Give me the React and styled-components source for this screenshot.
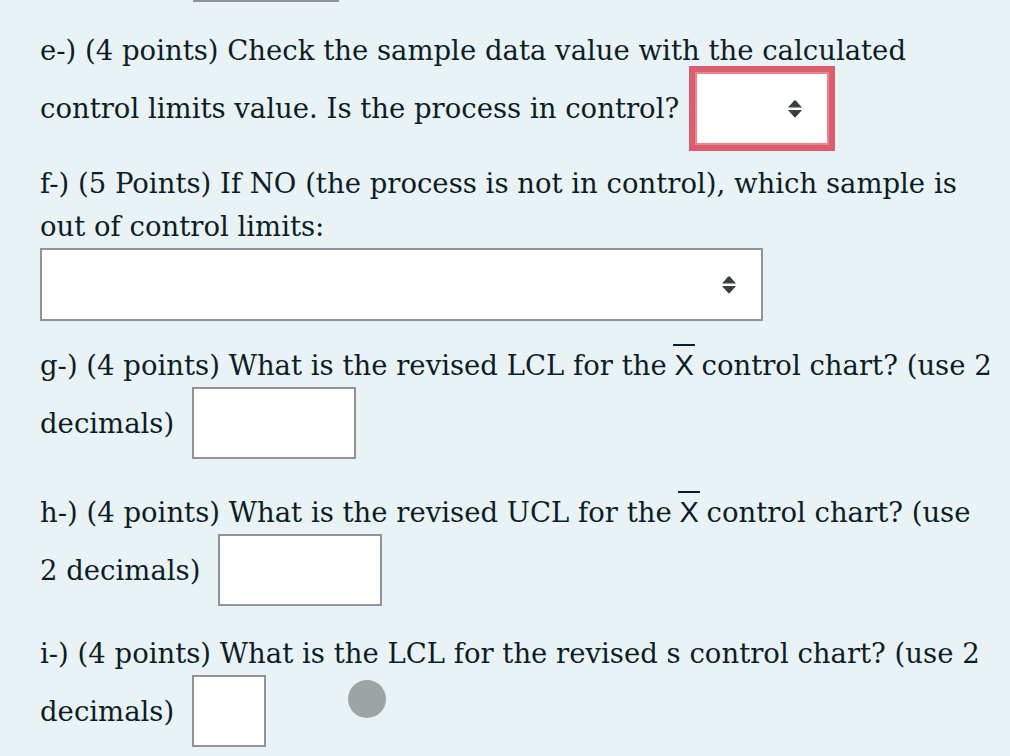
import React from "react";
import styled, { createGlobalStyle } from "styled-components";

const GlobalStyle = createGlobalStyle`
  html, body {
    margin: 0;
    padding: 0;
    background: #e9f2f5;
  }
  body {
    font-family: "DejaVu Serif", serif;
    font-size: 27.5px;
    color: #0c1e25;
  }
  * { box-sizing: border-box; }
`;

const Page = styled.div`
  padding: 0 0 0 40px;
  width: 1010px;
  height: 756px;
  overflow: hidden;
`;

const PrevInputEdge = styled.div`
  margin-left: 153px;
  width: 146px;
  height: 2px;
  background: #8f949a;
`;

const Question = styled.div`
  margin-top: ${(p) => p.$top}px;
`;

const Line = styled.div`
  line-height: 43px;
  white-space: nowrap;
`;

const Row = styled.div`
  display: flex;
  align-items: center;
  gap: ${(p) => p.$gap ?? 18}px;
  line-height: 43px;
  white-space: nowrap;
`;

const XBar = styled.span`
  display: inline-block;
  font-family: "Liberation Sans", Arial, sans-serif;
  font-size: 29px;
  line-height: 24px;
  padding: 7px 1px 0;
  border-top: 2px solid #0c1e25;
  margin: 0 -2px;
`;

const SelectBox = styled.div`
  width: ${(p) => p.$w}px;
  height: 73px;
  background: #ffffff;
  border: 2px solid ${(p) => (p.$focus ? "#ea8491" : "#8f949a")};
  box-shadow: ${(p) => (p.$focus ? "0 0 0 6px #dc5d6d" : "none")};
  display: flex;
  align-items: center;
  justify-content: flex-end;
  padding-right: 24px;
  flex-shrink: 0;
`;

const AnswerInput = styled.input`
  width: ${(p) => p.$w}px;
  height: 72px;
  border: 2px solid #8f949a;
  background: #ffffff;
  border-radius: 0;
  padding: 0 8px;
  font: inherit;
  flex-shrink: 0;
  outline: none;
`;

const Dot = styled.div`
  width: 38px;
  height: 38px;
  border-radius: 50%;
  background: #9ea4a5;
  align-self: flex-start;
  margin-top: 5px;
  margin-left: 64px;
`;

const SortArrows = () => (
  <svg width="16" height="20" viewBox="0 0 16 20" aria-hidden="true">
    <path d="M1 8.5 L7 1.8 Q8 0.8 9 1.8 L15 8.5 Z" fill="#393e43" />
    <path d="M1 11 L15 11 L9 17.7 Q8 18.7 7 17.7 Z" fill="#393e43" />
  </svg>
);

export default function App() {
  return (
    <>
      <GlobalStyle />
      <Page>
        <PrevInputEdge />

        <Question $top={27}>
          <Line>e-) (4 points) Check the sample data value with the calculated</Line>
          <Row $gap={16}>
            <span>control limits value. Is the process in control?</span>
            <SelectBox $w={134} $focus>
              <SortArrows />
            </SelectBox>
          </Row>
        </Question>

        <Question $top={17}>
          <Line>f-) (5 Points) If NO (the process is not in control), which sample is</Line>
          <Line>out of control limits:</Line>
          <SelectBox $w={723}>
            <SortArrows />
          </SelectBox>
        </Question>

        <Question $top={23}>
          <Line>
            g-) (4 points) What is the revised LCL for the <XBar>X</XBar> control chart? (use 2
          </Line>
          <Row>
            <span>decimals)</span>
            <AnswerInput $w={164} type="text" aria-label="revised LCL" />
          </Row>
        </Question>

        <Question $top={32}>
          <Line>
            h-) (4 points) What is the revised UCL for the <XBar>X</XBar> control chart? (use
          </Line>
          <Row>
            <span>2 decimals)</span>
            <AnswerInput $w={164} type="text" aria-label="revised UCL" />
          </Row>
        </Question>

        <Question $top={26}>
          <Line>i-) (4 points) What is the LCL for the revised s control chart? (use 2</Line>
          <Row>
            <span>decimals)</span>
            <AnswerInput $w={74} type="text" aria-label="revised s LCL" />
            <Dot />
          </Row>
        </Question>
      </Page>
    </>
  );
}
